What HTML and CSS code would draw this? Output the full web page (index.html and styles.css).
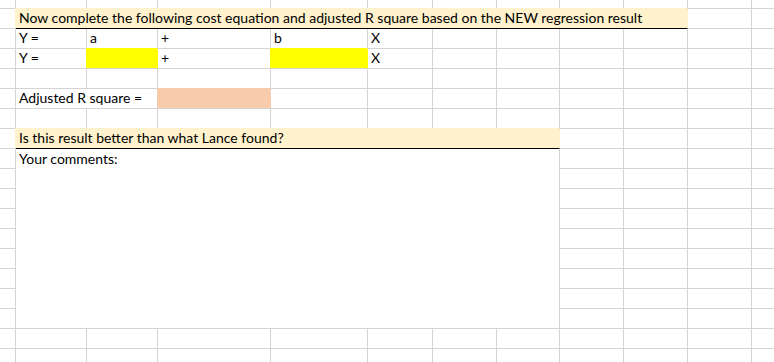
FILE: index.html
```html
<!DOCTYPE html>
<html lang="en">
<head>
    <meta charset="UTF-8">
    <meta name="viewport" content="width=device-width, initial-scale=1.0">
    <title>Regression worksheet</title>
    <link rel="stylesheet" href="styles.css">
</head>
<body>
    <table class="sheet">
        <colgroup>
            <col class="col-a">
            <col class="col-b">
            <col class="col-c">
            <col class="col-d">
            <col class="col-e">
            <col class="col-f">
            <col class="col-g">
            <col class="col-h">
            <col class="col-i">
            <col class="col-j">
            <col class="col-k">
            <col class="col-l">
        </colgroup>
        <tr class="row-cut">
            <td></td><td></td><td></td><td></td><td></td><td></td><td></td><td></td><td></td><td></td><td></td><td></td>
        </tr>
        <tr>
            <td></td>
            <td class="title" colspan="9">Now complete the following cost equation and adjusted R square based on the NEW regression result</td>
            <td></td><td></td>
        </tr>
        <tr>
            <td></td>
            <td>Y =</td>
            <td>a</td>
            <td>+</td>
            <td>b</td>
            <td>X</td>
            <td></td><td></td><td></td><td></td><td></td><td></td>
        </tr>
        <tr>
            <td></td>
            <td>Y =</td>
            <td class="input"></td>
            <td>+</td>
            <td class="input"></td>
            <td>X</td>
            <td></td><td></td><td></td><td></td><td></td><td></td>
        </tr>
        <tr>
            <td></td><td></td><td></td><td></td><td></td><td></td><td></td><td></td><td></td><td></td><td></td><td></td>
        </tr>
        <tr>
            <td></td>
            <td colspan="2">Adjusted R square =</td>
            <td class="answer"></td>
            <td></td><td></td><td></td><td></td><td></td><td></td><td></td><td></td>
        </tr>
        <tr>
            <td></td><td></td><td></td><td></td><td></td><td></td><td></td><td></td><td></td><td></td><td></td><td></td>
        </tr>
        <tr>
            <td></td>
            <td class="title" colspan="7">Is this result better than what Lance found?</td>
            <td></td><td></td><td></td><td></td>
        </tr>
        <tr>
            <td></td>
            <td class="comments" colspan="7" rowspan="9">Your comments:</td>
            <td></td><td></td><td></td><td></td>
        </tr>
        <tr><td></td><td></td><td></td><td></td><td></td></tr>
        <tr><td></td><td></td><td></td><td></td><td></td></tr>
        <tr><td></td><td></td><td></td><td></td><td></td></tr>
        <tr><td></td><td></td><td></td><td></td><td></td></tr>
        <tr><td></td><td></td><td></td><td></td><td></td></tr>
        <tr><td></td><td></td><td></td><td></td><td></td></tr>
        <tr><td></td><td></td><td></td><td></td><td></td></tr>
        <tr><td></td><td></td><td></td><td></td><td></td></tr>
        <tr>
            <td></td><td></td><td></td><td></td><td></td><td></td><td></td><td></td><td></td><td></td><td></td><td></td>
        </tr>
        <tr>
            <td></td><td></td><td></td><td></td><td></td><td></td><td></td><td></td><td></td><td></td><td></td><td></td>
        </tr>
    </table>
</body>
</html>
```

FILE: styles.css
```css
:root {
    --grid: #d4d4d4;
    --title-fill: #fff2cc;
    --input-fill: #ffff00;
    --answer-fill: #f8cbad;
}

* {
    margin: 0;
    padding: 0;
    box-sizing: border-box;
}

body {
    background: #fff;
    overflow: hidden;
    font-family: Lato, "Open Sans", sans-serif;
    font-size: 14px;
    color: #000;
}

.sheet {
    table-layout: fixed;
    border-collapse: separate;
    border-spacing: 0;
    width: 782px;
}

/* column widths, gridline to gridline */
.col-a { width: 16px; }
.col-b { width: 71px; }
.col-c { width: 71px; }
.col-d { width: 113px; }
.col-e { width: 97px; }
.col-f { width: 65px; }
.col-g { width: 64px; }
.col-h { width: 63px; }
.col-i { width: 64px; }
.col-j { width: 64px; }
.col-k { width: 64px; }
.col-l { width: 30px; }

.sheet td {
    height: 20px;
    padding: 0 2px 3px 3px;
    border-right: 1px solid var(--grid);
    border-bottom: 1px solid var(--grid);
    vertical-align: bottom;
    white-space: nowrap;
    overflow: hidden;
    line-height: 15px;
}

.sheet .row-cut td {
    height: 9px;
    padding: 0;
}

/* filled cells paint over the gridlines on their top and left */
.sheet .title {
    background: var(--title-fill);
    border-right-color: var(--title-fill);
    border-bottom-color: #000;
    box-shadow: -1px -1px 0 var(--title-fill);
    overflow: visible;
}

.sheet .input {
    background: var(--input-fill);
    border-right-color: var(--input-fill);
    box-shadow: -1px -1px 0 var(--input-fill);
}

.sheet .answer {
    background: var(--answer-fill);
    border-right-color: var(--answer-fill);
    box-shadow: -1px -1px 0 var(--answer-fill);
}

.sheet .comments {
    vertical-align: top;
    padding-top: 2px;
}
```
